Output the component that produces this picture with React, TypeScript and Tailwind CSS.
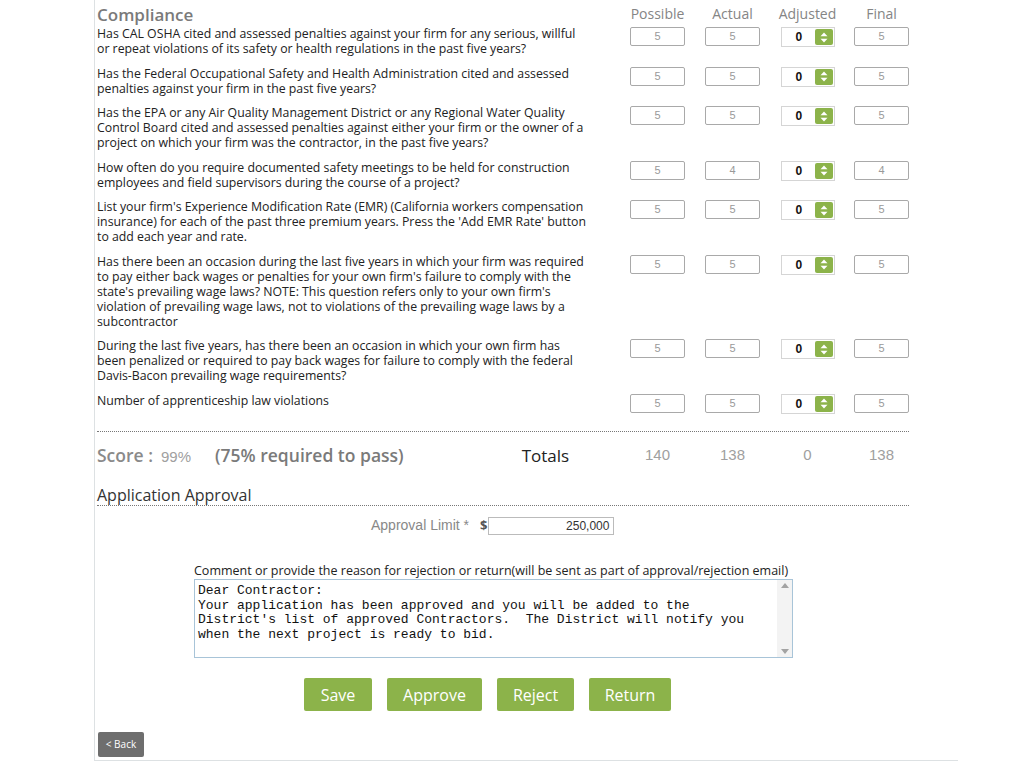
import React from 'react'

const questions = [
  {
    text: 'Has CAL OSHA cited and assessed penalties against your firm for any serious, willful or repeat violations of its safety or health regulations in the past five years?',
    actual: 5,
  },
  {
    text: 'Has the Federal Occupational Safety and Health Administration cited and assessed penalties against your firm in the past five years?',
    actual: 5,
  },
  {
    text: 'Has the EPA or any Air Quality Management District or any Regional Water Quality Control Board cited and assessed penalties against either your firm or the owner of a project on which your firm was the contractor, in the past five years?',
    actual: 5,
  },
  {
    text: 'How often do you require documented safety meetings to be held for construction employees and field supervisors during the course of a project?',
    actual: 4,
  },
  {
    text: "List your firm's Experience Modification Rate (EMR) (California workers compensation insurance) for each of the past three premium years. Press the 'Add EMR Rate' button to add each year and rate.",
    actual: 5,
  },
  {
    text: "Has there been an occasion during the last five years in which your firm was required to pay either back wages or penalties for your own firm's failure to comply with the state's prevailing wage laws? NOTE: This question refers only to your own firm's violation of prevailing wage laws, not to violations of the prevailing wage laws by a subcontractor",
    actual: 5,
  },
  {
    text: 'During the last five years, has there been an occasion in which your own firm has been penalized or required to pay back wages for failure to comply with the federal Davis-Bacon prevailing wage requirements?',
    actual: 5,
  },
  {
    text: 'Number of apprenticeship law violations',
    actual: 5,
  },
]

const sans = "font-['Open_Sans',sans-serif]"
const arial = "font-['Liberation_Sans',Arial,sans-serif]"

function ScoreBox({ value }: { value: number }) {
  return (
    <div className="flex justify-center">
      <div className={`w-[55px] h-[19px] border border-[#a9a9a9] rounded-[2px] bg-white flex items-center justify-center text-[11px] text-[#999] ${arial}`}>
        {value}
      </div>
    </div>
  )
}

function Spinner() {
  return (
    <div className="flex justify-center">
      <div className="w-[54px] h-[20px] border border-[#d5d5d5] bg-white flex items-center justify-between pl-[14px] pr-[1px]">
        <span className={`text-[12px] font-bold text-[#111] ${arial}`}>0</span>
        <div className="w-[18px] h-[16px] bg-[#8cb34a] rounded-[2px] flex items-center justify-center">
          <svg width="8" height="11" viewBox="0 0 8 11">
            <path d="M4 0.5 L7.5 4.2 L0.5 4.2 Z" fill="#fff" />
            <path d="M4 10.5 L7.5 6.8 L0.5 6.8 Z" fill="#fff" />
          </svg>
        </div>
      </div>
    </div>
  )
}

function GreenButton({ label, width }: { label: string; width: string }) {
  return (
    <button className={`${width} h-[33px] bg-[#8cb34a] rounded-[2px] text-white text-[16px] font-medium ${sans}`}>
      {label}
    </button>
  )
}

export default function App() {
  return (
    <div className="w-[1024px] h-[768px] bg-white overflow-hidden">
      <div className="ml-[94px] w-[864px] h-[761px] border-l border-b border-[#dde1e3] pl-[2px] flex flex-col">
        {/* Compliance header */}
        <div className="grid grid-cols-[523px_75px_75px_75px_73px] pt-[4px]">
          <div className={`text-[17px] font-semibold text-[#7a7a7a] leading-[22px] ${sans}`}>Compliance</div>
          {['Possible', 'Actual', 'Adjusted', 'Final'].map((h) => (
            <div key={h} className={`text-center text-[14px] font-medium text-[#858585] leading-[20px] ${sans}`}>
              {h}
            </div>
          ))}
        </div>

        <div className="flex flex-col gap-[9.5px]">
          {questions.map((q, i) => (
            <div key={i} className="grid grid-cols-[523px_75px_75px_75px_73px] items-start">
              <div className={`w-[489px] text-[12.3px] leading-[15px] text-[#222] ${sans}`}>{q.text}</div>
              <div className="pt-[1px]"><ScoreBox value={5} /></div>
              <div className="pt-[1px]"><ScoreBox value={q.actual} /></div>
              <div className="pt-[1px]"><Spinner /></div>
              <div className="pt-[1px]"><ScoreBox value={q.actual} /></div>
            </div>
          ))}
        </div>

        <div className="w-[812px] border-b border-dotted border-[#777] mt-[17px]" />

        {/* Score row */}
        <div className="grid grid-cols-[523px_75px_75px_75px_73px] items-center mt-[10px]">
          <div className={`flex items-baseline ${sans}`}>
            <span className="text-[17.5px] font-semibold text-[#8a8a8a]">Score :</span>
            <span className={`ml-[8px] text-[15px] text-[#a0a0a0] ${arial}`}>99%</span>
            <span className="ml-[24px] text-[17.5px] font-semibold text-[#7a7a7a]">(75% required to pass)</span>
            <span className="ml-[118px] text-[17px] text-[#222]">Totals</span>
          </div>
          {[140, 138, 0, 138].map((n, i) => (
            <div key={i} className={`text-center text-[15px] text-[#a0a0a0] ${arial}`}>{n}</div>
          ))}
        </div>

        {/* Application Approval */}
        <div className={`mt-[17px] text-[16px] text-[#333] leading-[20px] ${sans}`}>Application Approval</div>
        <div className="w-[812px] border-b border-dotted border-[#777]" />

        <div className="flex items-center mt-[9px] ml-[274px]">
          <span className={`text-[14px] text-[#888] ${arial}`}>Approval Limit *</span>
          <span className={`ml-[11px] text-[13px] font-bold text-[#555] ${sans}`}>$</span>
          <div className={`ml-[1px] w-[126px] h-[18px] border border-[#bbb] bg-white flex items-center justify-end pr-[4px] text-[12px] text-[#333] ${arial}`}>
            250,000
          </div>
        </div>

        {/* Comment */}
        <div className="ml-[97px] mt-[28px] w-[602px]">
          <div className={`text-[12.5px] leading-[14px] text-[#222] whitespace-nowrap ${sans}`}>
            Comment or provide the reason for rejection or return(will be sent as part of approval/rejection email)
          </div>
          <div className="mt-[1px] w-[599px] h-[79px] border border-[#a8c4d8] bg-white flex">
            <div className="flex-1 px-[3px] pt-[4px] font-['Liberation_Mono',monospace] text-[13px] leading-[14.7px] text-[#111] whitespace-pre">
              {"Dear Contractor:\nYour application has been approved and you will be added to the\nDistrict's list of approved Contractors.  The District will notify you\nwhen the next project is ready to bid."}
            </div>
            <div className="w-[15px] bg-[#f3f3f3] flex flex-col justify-between items-center py-[3px]">
              <svg width="8" height="5" viewBox="0 0 8 5"><path d="M4 0 L8 5 L0 5 Z" fill="#a3a3a3" /></svg>
              <svg width="8" height="5" viewBox="0 0 8 5"><path d="M0 0 L8 0 L4 5 Z" fill="#a3a3a3" /></svg>
            </div>
          </div>
        </div>

        {/* Buttons */}
        <div className="flex gap-[15px] ml-[207px] mt-[20px]">
          <GreenButton label="Save" width="w-[68px]" />
          <GreenButton label="Approve" width="w-[95px]" />
          <GreenButton label="Reject" width="w-[77px]" />
          <GreenButton label="Return" width="w-[82px]" />
        </div>

        <div className="mt-[19px] ml-[1px]">
          <button className={`w-[46px] h-[25px] bg-[#6e6e6e] rounded-[2px] text-white text-[10px] ${sans}`}>&lt; Back</button>
        </div>
      </div>
    </div>
  )
}
